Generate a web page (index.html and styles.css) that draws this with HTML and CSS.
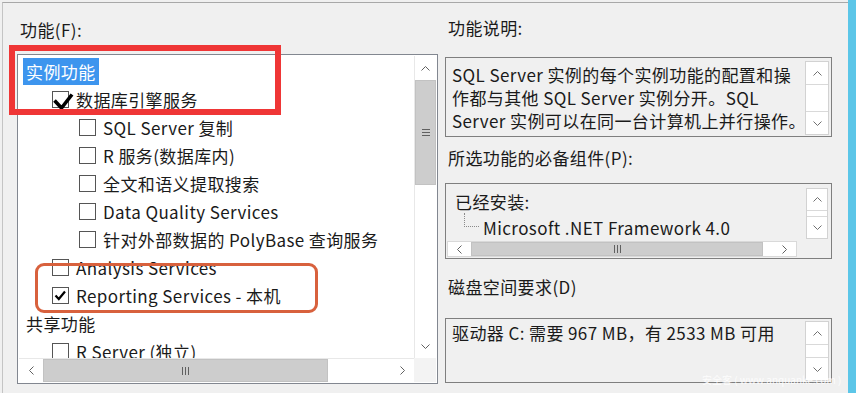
FILE: index.html
```html
<!DOCTYPE html>
<html lang="zh-CN">
<head>
    <meta charset="UTF-8">
    <meta name="viewport" content="width=device-width, initial-scale=1.0">
    <title>功能选择</title>
    <link rel="stylesheet" href="styles.css">
</head>
<body>
    <div class="window">
        <div class="dialog">
            <section class="features">
                <div class="label">功能(F):</div>
                <div class="listbox">
                    <ul class="tree">
                        <li class="row lv0"><span class="sel">实例功能</span></li>
                        <li class="row lv1">
                            <span class="box">
                                <svg class="big-check" width="24" height="22" viewBox="0 0 24 22"><path d="M1.5 8.5 L8.5 16 L19 2.5" fill="none" stroke="#000" stroke-width="3.6"/></svg>
                            </span>数据库引擎服务
                        </li>
                        <li class="row lv2"><span class="box"></span>SQL Server 复制</li>
                        <li class="row lv2"><span class="box"></span>R 服务(数据库内)</li>
                        <li class="row lv2"><span class="box"></span>全文和语义提取搜索</li>
                        <li class="row lv2"><span class="box"></span>Data Quality Services</li>
                        <li class="row lv2"><span class="box"></span>针对外部数据的 PolyBase 查询服务</li>
                        <li class="row lv1"><span class="box"></span>Analysis Services</li>
                        <li class="row lv1">
                            <span class="box">
                                <svg width="15" height="15" viewBox="0 0 15 15"><path d="M2.5 7.5 L5.8 11 L12 3.5" fill="none" stroke="#000" stroke-width="2.2"/></svg>
                            </span>Reporting Services - 本机
                        </li>
                        <li class="row lv0"><span class="plain">共享功能</span></li>
                        <li class="row lv1"><span class="box"></span>R Server (独立)</li>
                    </ul>
                    <div class="vscroll">
                        <div class="sb-btn"><svg width="9" height="5" viewBox="0 0 9 5"><path d="M0.5 4.5 L4.5 0.5 L8.5 4.5" fill="none" stroke="#606060"/></svg></div>
                        <div class="thumb thumb-v"><span class="grip-v"></span></div>
                        <div class="track"></div>
                        <div class="sb-btn"><svg width="9" height="5" viewBox="0 0 9 5"><path d="M0.5 0.5 L4.5 4.5 L8.5 0.5" fill="none" stroke="#606060"/></svg></div>
                    </div>
                    <div class="hscroll">
                        <div class="sb-btn sb-h"><svg width="5" height="9" viewBox="0 0 5 9"><path d="M4.5 0.5 L0.5 4.5 L4.5 8.5" fill="none" stroke="#606060"/></svg></div>
                        <div class="thumb thumb-h thumb-list"><span class="grip-h"></span></div>
                        <div class="track"></div>
                        <div class="sb-btn sb-h"><svg width="5" height="9" viewBox="0 0 5 9"><path d="M0.5 0.5 L4.5 4.5 L0.5 8.5" fill="none" stroke="#606060"/></svg></div>
                    </div>
                    <div class="corner"></div>
                </div>
            </section>

            <section class="details">
                <div class="label">功能说明:</div>
                <div class="textbox tb-desc">
                    <div class="tb-text">SQL Server 实例的每个实例功能的配置和操<br>作都与其他 SQL Server 实例分开。SQL<br>Server 实例可以在同一台计算机上并行操作。</div>
                    <div class="tb-vscroll">
                        <div class="sb-btn"><svg width="9" height="5" viewBox="0 0 9 5"><path d="M0.5 4.5 L4.5 0.5 L8.5 4.5" fill="none" stroke="#707070"/></svg></div>
                        <div class="track"></div>
                        <div class="sb-btn"><svg width="9" height="5" viewBox="0 0 9 5"><path d="M0.5 0.5 L4.5 4.5 L8.5 0.5" fill="none" stroke="#707070"/></svg></div>
                    </div>
                </div>

                <div class="label label-pre">所选功能的必备组件(P):</div>
                <div class="textbox tb-pre">
                    <div class="pre-list">
                        <div class="pre-line">已经安装:</div>
                        <div class="pre-line pre-item"><span class="connector"></span>Microsoft .NET Framework 4.0</div>
                    </div>
                    <div class="tb-vscroll tb-vscroll-small">
                        <div class="sb-btn"><svg width="9" height="5" viewBox="0 0 9 5"><path d="M0.5 4.5 L4.5 0.5 L8.5 4.5" fill="none" stroke="#707070"/></svg></div>
                        <div class="track"></div>
                        <div class="sb-btn"><svg width="9" height="5" viewBox="0 0 9 5"><path d="M0.5 0.5 L4.5 4.5 L8.5 0.5" fill="none" stroke="#707070"/></svg></div>
                    </div>
                    <div class="hscroll hscroll-small">
                        <div class="sb-btn sb-h"><svg width="5" height="9" viewBox="0 0 5 9"><path d="M4.5 0.5 L0.5 4.5 L4.5 8.5" fill="none" stroke="#606060"/></svg></div>
                        <div class="thumb thumb-h thumb-pre"><span class="grip-h"></span></div>
                        <div class="track"></div>
                        <div class="sb-btn sb-h"><svg width="5" height="9" viewBox="0 0 5 9"><path d="M0.5 0.5 L4.5 4.5 L0.5 8.5" fill="none" stroke="#606060"/></svg></div>
                    </div>
                </div>

                <div class="label label-disk">磁盘空间要求(D)</div>
                <div class="textbox tb-disk">
                    <div class="tb-text">驱动器 C: 需要 967 MB，有 2533 MB 可用</div>
                    <div class="tb-vscroll">
                        <div class="sb-btn"><svg width="9" height="5" viewBox="0 0 9 5"><path d="M0.5 4.5 L4.5 0.5 L8.5 4.5" fill="none" stroke="#707070"/></svg></div>
                        <div class="track"></div>
                        <div class="sb-btn"><svg width="9" height="5" viewBox="0 0 9 5"><path d="M0.5 0.5 L4.5 4.5 L8.5 0.5" fill="none" stroke="#707070"/></svg></div>
                    </div>
                </div>
            </section>

            <!-- annotation marks drawn over the screenshot -->
            <div class="mark mark-red"></div>
            <div class="mark mark-orange"></div>
            <div class="watermark">安全客 ( www.anquanke.com )</div>
        </div>
        <div class="edge"></div>
    </div>
</body>
</html>
```

FILE: styles.css
```css
* {
    box-sizing: border-box;
}
body {
    margin: 0;
    background-color: #f0f0f0;
    font-family: "Noto Sans CJK SC", "Noto Sans", sans-serif;
    font-size: 17px;
    letter-spacing: 0.4px;
    color: #1a1a1a;
}
.window {
    display: flex;
    height: 393px;
    overflow: hidden;
}
.dialog {
    position: relative;
    flex: 1;
    display: flex;
    margin: 2px 0 0 2px;
    padding-left: 14px;
    border-top: 1px solid #a8a8a8;
    border-left: 1px solid #c4c4c4;
}
.edge {
    width: 8px;
    background-color: #5cc6e8;
}
.label {
    height: 24px;
    line-height: 24px;
    padding-left: 3px;
    white-space: nowrap;
}

/* left: feature tree */
.features {
    width: 421px;
    padding-top: 15px;
}
.features .label {
    margin-bottom: 12px;
}
.listbox {
    height: 330px;
    display: grid;
    grid-template-columns: 1fr 22px;
    grid-template-rows: 1fr 24px;
    padding: 1px;
    background-color: #fff;
    border: 1px solid #828790;
}
.tree {
    margin: 0;
    padding: 1px 0 0;
    list-style: none;
    overflow: hidden;
}
.row {
    display: flex;
    align-items: center;
    height: 28px;
    white-space: nowrap;
}
.lv0 {
    padding-left: 4px;
}
.lv1 {
    padding-left: 33px;
}
.lv2 {
    padding-left: 60px;
}
.sel {
    padding: 0 3px;
    line-height: 27px;
    background-color: #3d95ee;
    color: #fff;
}
.plain {
    padding: 0 3px;
}
.box {
    position: relative;
    flex-shrink: 0;
    width: 17px;
    height: 17px;
    margin-right: 7px;
    background-color: #fff;
    border: 1px solid #555;
}
.box svg {
    display: block;
    margin: 0;
}
.box .big-check {
    position: absolute;
    left: 0;
    top: 0;
    overflow: visible;
}

/* scrollbars */
.sb-btn {
    display: flex;
    align-items: center;
    justify-content: center;
    height: 24px;
    background-color: #fff;
    flex-shrink: 0;
}
.sb-h {
    height: auto;
    width: 24px;
}
.track {
    flex: 1;
    background-color: #fff;
}
.thumb {
    display: flex;
    align-items: center;
    justify-content: center;
    background-color: #cdcdcd;
    border: 1px solid #c2c2c2;
    flex-shrink: 0;
}
.vscroll {
    display: flex;
    flex-direction: column;
    border-left: 1px solid #e8e8e8;
}
.thumb-v {
    height: 105px;
}
.hscroll {
    display: flex;
    border-top: 1px solid #e8e8e8;
}
.thumb-list {
    width: 285px;
}
.corner {
    background-color: #f3f3f3;
}
.grip-v {
    width: 8px;
    height: 7px;
    border-top: 1px solid #606060;
    border-bottom: 1px solid #606060;
    background: linear-gradient(#cdcdcd 2px, #606060 2px, #606060 3px, #cdcdcd 3px);
}
.grip-h {
    width: 7px;
    height: 8px;
    border-left: 1px solid #606060;
    border-right: 1px solid #606060;
    background: linear-gradient(90deg, #cdcdcd 2px, #606060 2px, #606060 3px, #cdcdcd 3px);
}

/* right: descriptions */
.details {
    width: 387px;
    margin-left: 7px;
    padding-top: 13px;
}
.details .label {
    margin-bottom: 17px;
}
.details .label-pre {
    margin-top: 9px;
    margin-bottom: 13px;
}
.details .label-disk {
    margin-top: 16px;
    margin-bottom: 19px;
}
.textbox {
    display: flex;
    border: 1px solid #7f7f7f;
    background-color: #f0f0f0;
}
.tb-desc {
    height: 80px;
}
.tb-disk {
    height: 65px;
}
.tb-text {
    flex: 1;
    padding: 5px 6px;
    line-height: 23px;
    white-space: nowrap;
    overflow: hidden;
}
.tb-disk .tb-text {
    padding-top: 2px;
}
.tb-vscroll {
    display: flex;
    flex-direction: column;
    width: 24px;
    margin: 3px 2px 1px 0;
    border: 1px solid #d2d2d2;
    background-color: #fff;
}
.tb-vscroll .sb-btn {
    height: 23px;
}
.tb-vscroll .sb-btn:first-child {
    border-bottom: 1px solid #d9d9d9;
}
.tb-vscroll .sb-btn:last-child {
    border-top: 1px solid #d9d9d9;
}
.tb-disk .tb-vscroll {
    margin-top: 2px;
}

.tb-pre {
    height: 76px;
    display: grid;
    grid-template-columns: 1fr 22px;
    grid-template-rows: 1fr 16px;
    column-gap: 9px;
    padding: 0 3px 1px 1px;
}
.pre-list {
    padding: 5px 0 0 8px;
    overflow: hidden;
    white-space: nowrap;
}
.pre-line {
    display: flex;
    height: 26px;
    line-height: 26px;
}
.pre-item {
    padding-left: 9px;
}
.connector {
    width: 15px;
    height: 14px;
    margin-top: -2px;
    margin-right: 4px;
    border-left: 1px dotted #8a8a8a;
    border-bottom: 1px dotted #8a8a8a;
}
.tb-vscroll-small {
    width: 22px;
    margin: 4px 0 2px;
}
.tb-vscroll-small .sb-btn {
    height: 22px;
}
.hscroll-small {
    border: 1px solid #d9d9d9;
    background-color: #fff;
}
.hscroll-small .sb-h {
    width: 23px;
}
.thumb-pre {
    width: 292px;
}

/* annotations */
.mark {
    position: absolute;
    pointer-events: none;
}
.mark-red {
    left: 6px;
    top: 42px;
    width: 272px;
    height: 70px;
    border: 6px solid #ef3636;
}
.mark-orange {
    left: 32px;
    top: 260px;
    width: 283px;
    height: 50px;
    border: 3px solid #d8613d;
    border-radius: 9px;
}
.watermark {
    position: absolute;
    left: 699px;
    top: 370px;
    font-size: 10px;
    line-height: 14px;
    letter-spacing: 0;
    color: rgba(255, 255, 255, 0.85);
    white-space: nowrap;
}
```
